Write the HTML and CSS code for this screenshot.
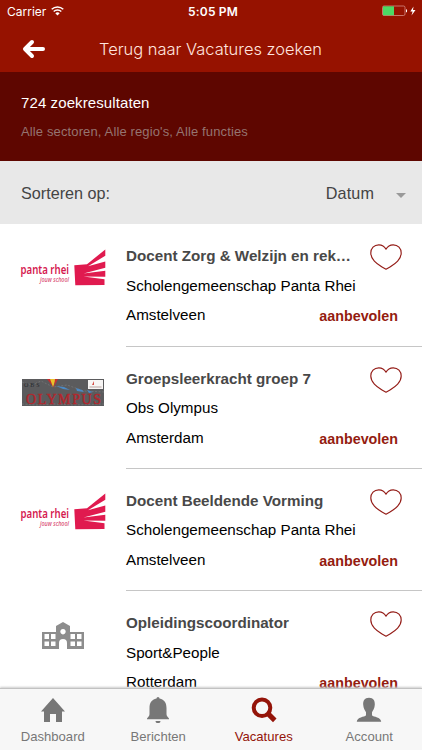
FILE: index.html
```html
<!DOCTYPE html>
<html lang="nl">
<head>
<meta charset="utf-8">
<title>Vacatures zoeken</title>
<link rel="stylesheet" href="styles.css">
</head>
<body>
<svg class="defs" width="0" height="0" aria-hidden="true">
  <symbol id="heart" viewBox="0 0 32 26"><path d="M16 5.200C14.500 2.400 11.800.8 8.800.8 4 .8.8 4.400.8 9c0 6.800 6.700 11 11.200 14.100L16 25.200l4-2.100C24.500 20 31.200 15.800 31.200 9c0-4.600-3.200-8.200-8-8.200-3 0-5.700 1.600-7.200 4.400z" fill="none" stroke="#941c17" stroke-width="1.150" stroke-linejoin="round"/></symbol>
  <symbol id="panta" viewBox="0 0 90 40">
    <text x="1.500" y="24.500" class="panta-name" textLength="48.500" lengthAdjust="spacingAndGlyphs">panta rhei</text>
    <text x="21" y="33" class="panta-tag" textLength="29" lengthAdjust="spacingAndGlyphs">jouw school</text>
    <path d="M55.300 16.300L68 15.200 86.300.500v6.200L69 17.200l17.300-4.700v6.200L64.500 24.500l21.800-2.800v6L64.500 27.500 85.500 30.200v5.800L56.300 36.300z" fill="#e01a4f"/>
  </symbol>
</svg>
<main class="screen">
  <header class="top">
    <div class="status">
      <span class="carrier">Carrier</span>
      <svg class="wifi" viewBox="0 0 13 10"><path d="M.7 3.300a8.300 8.300 0 0 1 11.600 0M2.700 5.500a5.500 5.500 0 0 1 7.600 0" fill="none" stroke="#fff" stroke-width="1.400"/><path d="M4.300 7.200a3.200 3.200 0 0 1 4.400 0L6.500 9.500z" fill="#fff"/></svg>
      <span class="clock">5:05 PM</span>
      <svg class="battery" viewBox="0 0 35 12"><rect x=".5" y="1" width="22.500" height="9.500" rx="1.500" fill="none" stroke="#d68e86" stroke-width=".8"/><path d="M1 1.300h11v9H1z" fill="#4cd964"/><path d="M24 4c1.500.4 1.500 3.200 0 3.600z" fill="#fff"/><path d="M31.500 1.500L28.300 6.500h2.300L29.500 10.500l4-5.400h-2.500z" fill="#fff"/></svg>
    </div>
    <div class="nav">
      <svg class="back" viewBox="0 0 24 20"><path d="M10 3L3 10l7 7M3.500 10H21" fill="none" stroke="#fff" stroke-width="4" stroke-linecap="round" stroke-linejoin="round"/></svg>
      <h1>Terug naar Vacatures zoeken</h1>
    </div>
  </header>
  <section class="summary">
    <div class="count">724 zoekresultaten</div>
    <div class="filters">Alle sectoren, Alle regio's, Alle functies</div>
  </section>
  <section class="sort">
    <span>Sorteren op:</span>
    <span class="sort-value">Datum</span>
    <i class="caret"></i>
  </section>
  <section class="list">
    <article class="job">
      <div class="logo"><svg class="panta"><use href="#panta"/></svg></div>
      <div class="info">
        <div class="head"><h2>Docent Zorg &amp; Welzijn en rek…</h2><svg class="heart"><use href="#heart"/></svg></div>
        <div class="school">Scholengemeenschap Panta Rhei</div>
        <div class="place"><span>Amstelveen</span><b>aanbevolen</b></div>
      </div>
    </article>
    <article class="job">
      <div class="logo"><svg class="olympus" viewBox="0 0 82 27">
        <rect width="82" height="27" fill="#5b5b5d"/>
        <path d="M0 3l10 3 9-4 12 6 14-2 17 6 20 1M0 25l14 1 18-1 20 1 30-1" stroke="#6f7173" fill="none" stroke-dasharray="2 1.500"/>
        <path d="M25 0h4l3 9z" fill="#c92a2b"/><path d="M28 0h6l-3 8z" fill="#e8c32c"/><path d="M33 0h3l-4 8z" fill="#c43332"/>
        <path d="M34 7l8 1 6 3-7-1zM54 9l6 2 2 2-7-1zM65 11l6 2-4 1z" fill="#4b89c5"/>
        <text x="2" y="7.500" class="oly-small">OBS</text>
        <text x="4" y="24.500" class="oly-name" textLength="75">OLYMPUS</text>
        <path d="M66 1h15v9H66z" fill="#f7f5f4"/><path d="M72 2l-2 4h2z" fill="#d54e46"/><path d="M67.500 8h12" stroke="#b7a19e"/>
      </svg></div>
      <div class="info">
        <div class="head"><h2>Groepsleerkracht groep 7</h2><svg class="heart"><use href="#heart"/></svg></div>
        <div class="school">Obs Olympus</div>
        <div class="place"><span>Amsterdam</span><b>aanbevolen</b></div>
      </div>
    </article>
    <article class="job">
      <div class="logo"><svg class="panta"><use href="#panta"/></svg></div>
      <div class="info">
        <div class="head"><h2>Docent Beeldende Vorming</h2><svg class="heart"><use href="#heart"/></svg></div>
        <div class="school">Scholengemeenschap Panta Rhei</div>
        <div class="place"><span>Amstelveen</span><b>aanbevolen</b></div>
      </div>
    </article>
    <article class="job">
      <div class="logo"><svg class="building" viewBox="0 0 42 27"><path fill-rule="evenodd" fill="#8d8d8d" d="M0 10h14V4l7-4 7 4v6h14v17H25v-6a4 4 0 0 0-8 0v6H0zM2.500 12v5h4.500v-5zM9 12v5h4.500v-5zM2.500 19.500v4.500h4.500v-4.500zM9 19.500v4.500h4.500v-4.500zM28.500 12v5h4.500v-5zM35 12v5h4.500v-5zM28.500 19.500v4.500h4.500v-4.500zM35 19.500v4.500h4.500v-4.500zM21 7a2.700 2.700 0 1 0 .01 0z"/></svg></div>
      <div class="info">
        <div class="head"><h2>Opleidingscoordinator</h2><svg class="heart"><use href="#heart"/></svg></div>
        <div class="school">Sport&amp;People</div>
        <div class="place"><span>Rotterdam</span><b>aanbevolen</b></div>
      </div>
    </article>
  </section>
  <nav class="tabs">
    <a class="tab"><svg viewBox="0 0 26 26"><path d="M13 1l12 13.500h-3V25h-6v-8h-6v8H4V14.500H1z"/></svg>Dashboard</a>
    <a class="tab"><svg viewBox="0 0 26 26"><path d="M11.500 1.500a1.500 1.500 0 0 1 3 0c5 1 7 4.500 7 9.500v6c0 2 1 2.500 2.500 4.500v.7H2v-.7c1.500-2 2.500-2.500 2.500-4.500v-6c0-5 2-8.500 7-9.500zM10.500 24h5a2.500 2.200 0 0 1-5 0z"/></svg>Berichten</a>
    <a class="tab active"><svg viewBox="0 0 26 26"><circle cx="11" cy="10.800" r="8.300" fill="none" stroke="currentColor" stroke-width="4"/><path d="M18.500 14.500l7 7-3.500 3.700-7-7z"/></svg>Vacatures</a>
    <a class="tab"><svg viewBox="0 0 26 26"><path d="M13 .8c4.500 0 6 3 5.800 7-.2 3.600-1.800 5.600-2.800 7.400v3c1.500 2 9 1.500 9.200 6.600H.8C1 19.700 8.500 20.200 10 18.200v-3c-1-1.800-2.600-3.800-2.800-7.400C7 3.800 8.500.8 13 .8z"/></svg>Account</a>
  </nav>
</main>
</body>
</html>
```
FILE: styles.css
```css
* { box-sizing: border-box; }
body { margin: 0; font-family: "Liberation Sans", Arial, sans-serif; background: #fff; }
h1, h2 { margin: 0; }
.defs { position: absolute; }
.screen { width: 422px; height: 750px; overflow: hidden; display: flex; flex-direction: column; }

.top { height: 72px; flex: none; background: #961200; color: #fff; }
.status { height: 22px; display: grid; grid-template-columns: 43px 138px 1fr 36px; align-items: center; padding: 0 4px 0 7px; font-family: Inter, sans-serif; font-size: 12px; }
.wifi { width: 13px; height: 10px; margin-left: 1px; }
.clock { font-weight: 600; letter-spacing: .2px; }
.battery { width: 35px; height: 12px; }
.nav { height: 53px; display: flex; align-items: center; padding-left: 22px; }
.back { width: 24px; height: 20px; margin-right: 53px; }
.nav h1 { font-family: Inter, sans-serif; font-weight: 300; font-size: 16.450px; color: #ffe5df; white-space: nowrap; }

.summary { height: 89px; flex: none; background: #5e0600; padding: 22px 21px 0; }
.count { color: #fff; font-size: 15px; letter-spacing: .1px; line-height: 18px; }
.filters { color: #957470; font-size: 13px; letter-spacing: .13px; line-height: 16px; margin-top: 12px; }

.sort { height: 63px; flex: none; display: flex; align-items: center; padding: 2px 16px 0 21px; background: #e8e8e8; color: #444; font-size: 16.200px; }
.sort-value { margin-left: auto; letter-spacing: .1px; }
.caret { margin: 3px 0 0 22px; border: 5.500px solid transparent; border-top: 5.500px solid #999; border-bottom: 0; }

.list { flex: 1; min-height: 0; overflow: hidden; padding-top: .6px; }
.job { height: 122.200px; display: flex; }
.logo { width: 126px; flex: none; height: 88px; display: flex; align-items: center; justify-content: center; }
.panta { width: 90px; height: 40px; margin: 1px 0 0 2px; }
.panta-name { font: 600 12px "Noto Sans", sans-serif; fill: #d51950; }
.panta-tag { font: italic 500 6.500px "Noto Sans", sans-serif; fill: #d94a72; }
.olympus { width: 82px; height: 27px; margin-top: 4px; }
.oly-small { font: 6px "Liberation Serif", serif; letter-spacing: 2px; fill: #272a2d; }
.oly-name { font: 14px "Liberation Serif", serif; fill: #b3262c; stroke: #b3262c; stroke-width: .4px; }
.building { width: 42px; height: 27px; }
.info { flex: 1; height: 122.200px; padding-top: 19.800px; border-bottom: 1px solid #c6c6c6; }
.head { height: 26px; display: flex; justify-content: space-between; padding-right: 20px; }
h2 { font-size: 15.200px; line-height: 24px; color: #484848; white-space: nowrap; }
.heart { width: 32px; height: 26px; }
.school { font-size: 15.200px; line-height: 18px; margin-top: 6.600px; }
.place { display: flex; justify-content: space-between; align-items: center; font-size: 15.200px; line-height: 18px; margin-top: 10.400px; padding-right: 24px; }
.place b { font-size: 14.300px; color: #941c10; line-height: 18px; padding-top: 2px; }

.tabs { height: 62px; flex: none; display: grid; grid-template-columns: repeat(4, 1fr); background: #f7f7f7; border-top: 1px solid #c2c2c2; box-shadow: 0 -1px 2px #ccc; position: relative; }
.tab { display: flex; flex-direction: column; align-items: center; padding-top: 8px; color: #777; font-size: 13.100px; line-height: 16px; }
.tab svg { width: 26px; height: 26px; fill: currentColor; margin-bottom: 6px; }
.tab.active { color: #941409; }
```
